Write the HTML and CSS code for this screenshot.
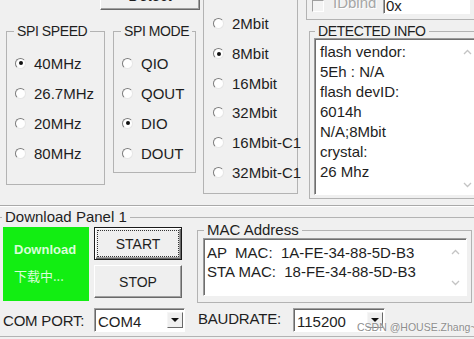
FILE: index.html
```html
<!DOCTYPE html>
<html lang="en">
<head>
<meta charset="UTF-8" />
<meta name="viewport" content="width=device-width, initial-scale=1" />
<title>Flash Download Tool</title>
<link rel="stylesheet" href="styles.css">
</head>
<body>
  <div class="top">
    <div class="col-spi">
      <button class="btn detect" type="button">Detect</button>
      <div class="spi-row">
        <fieldset class="group spi-speed">
          <legend class="caps">SPI SPEED</legend>
          <label class="opt"><span class="radio on"></span>40MHz</label>
          <label class="opt"><span class="radio"></span>26.7MHz</label>
          <label class="opt"><span class="radio"></span>20MHz</label>
          <label class="opt"><span class="radio"></span>80MHz</label>
        </fieldset>
        <fieldset class="group spi-mode">
          <legend class="caps">SPI MODE</legend>
          <label class="opt"><span class="radio"></span>QIO</label>
          <label class="opt"><span class="radio"></span>QOUT</label>
          <label class="opt"><span class="radio on"></span>DIO</label>
          <label class="opt"><span class="radio"></span>DOUT</label>
        </fieldset>
      </div>
    </div>

    <fieldset class="group flash">
      <label class="opt"><span class="radio"></span>2Mbit</label>
      <label class="opt"><span class="radio on"></span>8Mbit</label>
      <label class="opt"><span class="radio"></span>16Mbit</label>
      <label class="opt"><span class="radio"></span>32Mbit</label>
      <label class="opt"><span class="radio"></span>16Mbit-C1</label>
      <label class="opt"><span class="radio"></span>32Mbit-C1</label>
    </fieldset>

    <div class="col-info">
      <div class="group idbind">
        <span class="check"></span>
        <span class="muted">IDbind</span>
        <span class="field">0x</span>
      </div>
      <fieldset class="group detected">
        <legend class="caps">DETECTED INFO</legend>
        <div class="memo info-memo">
          <div class="memo-text">flash vendor:<br>5Eh : N/A<br>flash devID:<br>6014h<br>N/A;8Mbit<br>crystal:<br>26 Mhz</div>
          <div class="scroll">
            <svg width="9" height="6" viewBox="0 0 9 6"><polyline points="1,5 4.5,1.5 8,5" /></svg>
            <svg width="9" height="6" viewBox="0 0 9 6"><polyline points="1,1 4.5,4.5 8,1" /></svg>
          </div>
        </div>
      </fieldset>
    </div>
  </div>

  <fieldset class="group panel">
    <legend>Download Panel 1</legend>
    <div class="panel-row">
      <div class="status">Download<br><span class="cjk">下载中...</span></div>
      <div class="btn-col">
        <button class="btn start" type="button">START</button>
        <button class="btn" type="button">STOP</button>
      </div>
      <fieldset class="group mac">
        <legend>MAC Address</legend>
        <div class="memo mac-memo">
          <div class="memo-text">AP  MAC:  1A-FE-34-88-5D-B3
STA MAC:  18-FE-34-88-5D-B3</div>
          <div class="scroll">
            <svg width="9" height="6" viewBox="0 0 9 6"><polyline points="1,5 4.5,1.5 8,5" /></svg>
            <svg width="9" height="6" viewBox="0 0 9 6"><polyline points="1,1 4.5,4.5 8,1" /></svg>
          </div>
        </div>
      </fieldset>
    </div>
    <div class="port-row">
      <span class="lbl com-lbl">COM PORT:</span>
      <div class="combo com"><span class="combo-text">COM4</span><span class="drop"></span></div>
      <span class="lbl baud-lbl">BAUDRATE:</span>
      <div class="combo baud"><span class="combo-text">115200</span><span class="drop"></span></div>
    </div>
  </fieldset>

  <div class="watermark">CSDN @HOUSE.Zhang~</div>
</body>
</html>
```

FILE: styles.css
```css
/* Reset */
* {
  box-sizing: border-box;
}

body {
  margin: 0;
  width: 474px;
  height: 339px;
  overflow: hidden;
  position: relative;
  background: #f0f0f0;
  color: #1e1e1e;
  font-family: 'Liberation Sans', Arial, 'Noto Sans CJK SC', sans-serif;
  font-size: 15px;
}

/* group boxes */
.group {
  margin: 0;
  padding: 0;
  min-width: 0;
  border: 1px solid #b3b3b3;
}

.group legend {
  padding: 0 3px;
  margin-left: -1px;
  line-height: 16px;
  white-space: nowrap;
}

.group legend.caps {
  font-size: 14px;
  letter-spacing: -0.4px;
}

/* radio options */
.opt {
  display: flex;
  align-items: center;
  gap: 8px;
  height: 30px;
  white-space: nowrap;
}

.radio {
  position: relative;
  flex: none;
  width: 11px;
  height: 11px;
  border-radius: 50%;
  background: #fff;
  border: 1px solid;
  border-color: #7c7c7c #e6e6e6 #e6e6e6 #7c7c7c;
}

.radio.on::after {
  content: '';
  position: absolute;
  left: 2.5px;
  top: 2.5px;
  width: 4px;
  height: 4px;
  border-radius: 50%;
  background: #111;
}

/* buttons */
.btn {
  display: block;
  font: inherit;
  color: inherit;
  background: #efefef;
  border: 1px solid;
  border-color: #fff #696969 #696969 #fff;
  box-shadow: inset -1px -1px 0 #a0a0a0;
  padding: 0;
}

.btn.start {
  border-color: #1a1a1a;
  box-shadow: inset 1px 1px 0 #fff, inset -1px -1px 0 #696969, inset -2px -2px 0 #a0a0a0;
  outline: 1px dotted #333;
  outline-offset: -4px;
}

/* top area */
.top {
  display: flex;
  align-items: flex-start;
  height: 206px;
  border-bottom: 1px solid #a9a9a9;
  box-shadow: 0 1px 0 #fff;
}

.col-spi {
  flex: none;
  width: 203px;
}

.detect {
  margin: -22px 0 0 100px;
  width: 100px;
  height: 32px;
  padding-top: 3px;
}

.spi-row {
  display: flex;
  align-items: flex-start;
  margin-top: 13px;
}

.spi-speed {
  margin-left: 6px;
  width: 99px;
  height: 162px;
  padding: 9px 0 0 8px;
}

.spi-mode {
  margin-left: 8px;
  width: 83px;
  height: 150px;
  padding: 9px 0 0 8px;
}

.flash {
  flex: none;
  margin-top: -20px;
  width: 95px;
  height: 214px;
  padding: 28px 0 0 9px;
}

.flash .opt {
  height: 29.7px;
}

.col-info {
  flex: none;
  width: 175px;
  margin-left: 8px;
}

.idbind {
  display: flex;
  align-items: flex-end;
  margin-top: -20px;
  height: 40px;
  padding: 0 0 5px 5px;
}

.check {
  flex: none;
  width: 12px;
  height: 12px;
  margin-bottom: 2px;
  background: #f4f4f4;
  border: 1px solid;
  border-color: #a0a0a0 #fff #fff #a0a0a0;
}

.muted {
  width: 50px;
  margin-left: 9px;
  margin-bottom: 3px;
  color: #a6a6a6;
  text-shadow: 1px 1px 0 #fff;
}

.field {
  width: 87px;
  height: 24px;
  padding: 6px 0 0 2px;
  background: #fff;
  border: 1px solid;
  border-color: #a0a0a0 #fff #fff #a0a0a0;
  box-shadow: inset 1px 1px 0 #696969;
}

.detected {
  margin: 3px 0 0 3px;
  width: 175px;
  height: 176px;
  padding: 0 0 0 4px;
}

.detected legend {
  margin-left: 1px;
}

/* memo boxes (read only text areas) */
.memo {
  display: flex;
  background: #fff;
  border: 1px solid;
  border-color: #9a9a9a #fff #fff #9a9a9a;
  box-shadow: inset 1px 1px 0 #6f6f6f;
}

.memo-text {
  flex: 1;
  white-space: pre;
}

.scroll {
  flex: none;
  width: 17px;
  display: flex;
  flex-direction: column;
  align-items: center;
  justify-content: space-between;
}

.scroll svg {
  display: block;
  fill: none;
  stroke: #c4c4c4;
  stroke-width: 1.3;
}

.info-memo {
  margin-top: -1px;
  width: 163px;
  height: 157px;
}

.info-memo .memo-text {
  padding: 3px 0 0 5px;
  line-height: 20px;
  white-space: normal;
}

.info-memo .scroll {
  padding: 10px 0 6px;
}

/* download panel */
.panel {
  margin: 3px 0 0 -1px;
  width: 480px;
  height: 128px;
  padding: 2px 0 0 3px;
}

.panel-row {
  display: flex;
  align-items: flex-start;
}

.status {
  flex: none;
  width: 86px;
  height: 74px;
  padding: 10px 0 0 11px;
  background: #12ee12;
  color: #d9ffd9;
  font-size: 13px;
  font-weight: bold;
  line-height: 26px;
}

.cjk {
  font-weight: normal;
  font-family: 'Noto Sans CJK SC', sans-serif;
}

.btn-col {
  flex: none;
  display: flex;
  flex-direction: column;
  gap: 5px;
  width: 88px;
  margin-left: 5px;
}

.btn-col .btn {
  width: 88px;
  height: 33px;
  font-size: 14px;
}

.mac {
  flex: none;
  margin: -5px 0 0 15px;
  width: 275px;
  height: 81px;
  padding: 0 0 0 5px;
}

.mac legend {
  margin-left: 1px;
}

.mac-memo {
  width: 264px;
  height: 58px;
}

.mac-memo .memo-text {
  padding: 4px 0 0 3px;
  line-height: 19px;
}

.mac-memo .scroll {
  padding: 10px 2px 9px 0;
  width: 19px;
}

/* com port row */
.port-row {
  display: flex;
  align-items: center;
  margin-top: 5px;
  height: 24px;
}

.lbl {
  flex: none;
  white-space: nowrap;
  letter-spacing: -0.2px;
}

.com-lbl {
  width: 91px;
}

.baud-lbl {
  width: 95px;
  margin-left: 13px;
  margin-top: -4px;
}

.combo {
  flex: none;
  display: flex;
  align-items: flex-start;
  height: 24px;
  background: #fff;
  border: 1px solid;
  border-color: #a0a0a0 #fff #fff #a0a0a0;
  box-shadow: inset 1px 1px 0 #696969;
}

.combo.com {
  width: 91px;
}

.combo.baud {
  width: 92px;
}

.combo-text {
  flex: 1;
  padding: 4px 0 0 3px;
}

.drop {
  flex: none;
  position: relative;
  width: 16px;
  height: 16px;
  margin: 3px 1px 0 0;
  background: #efefef;
  border: 1px solid;
  border-color: #f6f6f6 #696969 #696969 #f6f6f6;
}

.drop::after {
  content: '';
  position: absolute;
  left: 3px;
  top: 5px;
  border-left: 4px solid transparent;
  border-right: 4px solid transparent;
  border-top: 4px solid #111;
}

.watermark {
  position: absolute;
  left: 357px;
  top: 321px;
  font-size: 10.5px;
  color: #8e8e8e;
  text-shadow: 0 0 2px #fff;
  white-space: nowrap;
}
```
